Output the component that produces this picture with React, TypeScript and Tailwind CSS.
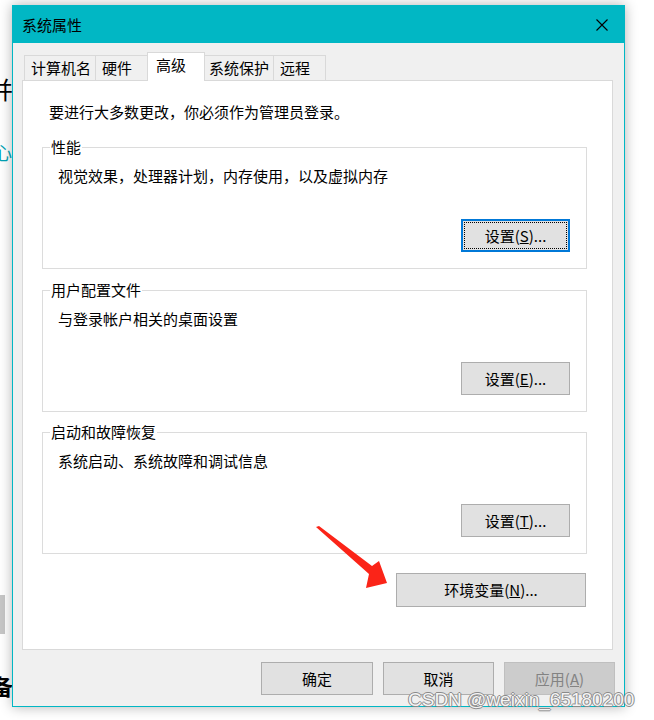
import React from "react";

const FONT = { fontFamily: '"Noto Sans CJK SC", "Microsoft YaHei", sans-serif' };

function Btn({
  children,
  w,
  focused,
  disabled,
  h = "h-[33px]",
}: {
  children: React.ReactNode;
  w: string;
  focused?: boolean;
  disabled?: boolean;
  h?: string;
}) {
  const base = `relative flex items-center justify-center ${w} ${h} text-[15px] leading-[20px]`;
  if (focused)
    return (
      <div className={`${base} bg-[#e1e1e1] border-2 border-[#0078d7] text-black`}>
        <span className="absolute inset-[1px] border border-dotted border-black" />
        <span className="relative">{children}</span>
      </div>
    );
  if (disabled)
    return (
      <div className={`${base} bg-[#cccccc] border border-[#bfbfbf] text-[#838383]`}>{children}</div>
    );
  return <div className={`${base} bg-[#e1e1e1] border border-[#adadad] text-black`}>{children}</div>;
}

function Group({
  title,
  desc,
  btn,
  focused,
  className = "",
}: {
  title: string;
  desc: string;
  btn: React.ReactNode;
  focused?: boolean;
  className?: string;
}) {
  return (
    <div
      className={`relative h-[122px] border border-[#dcdcdc] flex flex-col justify-between pt-[18px] pb-[16px] pl-[15px] pr-[16px] ${className}`}
    >
      <span className="absolute -top-[11px] left-[7px] bg-white px-[1px] text-[15px] leading-[20px] text-black">
        {title}
      </span>
      <div className="text-[15px] leading-[20px] text-black">{desc}</div>
      <div className="self-end">
        <Btn w="w-[109px]" focused={focused}>
          {btn}
        </Btn>
      </div>
    </div>
  );
}

export default function App() {
  const tabs = [
    { label: "计算机名", w: "w-[72px]", pl: "pl-[6px]" },
    { label: "硬件", w: "w-[53px]", pl: "pl-[6px]" },
    { label: "高级", w: "w-[58px]", pl: "pl-[8px]", active: true },
    { label: "系统保护", w: "w-[70px]", pl: "pl-[4px]" },
    { label: "远程", w: "w-[53px]", pl: "pl-[6px]" },
  ];
  return (
    <div className="relative w-[654px] h-[720px] bg-white overflow-hidden" style={FONT}>
      {/* background page fragments behind the window */}
      <span className="absolute left-[-11px] top-[74px] text-[24px] leading-[30px] text-black">并</span>
      <span className="absolute left-[-6px] top-[141px] text-[18px] leading-[22px] text-[#00a3b5]">心</span>
      <span className="absolute left-0 top-[595px] w-[5px] h-[39px] bg-[#c6c6c6]" />
      <span className="absolute left-[-9px] top-[672px] text-[22px] leading-[26px] font-bold text-black">备</span>

      {/* window */}
      <div className="relative ml-[12px] mt-[5px] w-[613px] h-[702px] border border-[#01b7c4] bg-[#f0f0f0] flex flex-col shadow-[0_0_12px_rgba(0,0,0,0.3)]">
        <div className="h-[37px] bg-[#01b7c4] flex items-center justify-between pl-[9px]">
          <span className="text-[15px] leading-[20px] text-black">系统属性</span>
          <div className="w-[46px] h-full flex items-center justify-center mr-[-1px]">
            <svg width="12" height="12" viewBox="0 0 12 12">
              <path d="M0.5 0.5L11.5 11.5M11.5 0.5L0.5 11.5" stroke="#000" strokeWidth="1.1" />
            </svg>
          </div>
        </div>

        <div className="flex-1 flex flex-col pl-[9px] pr-[11px]">
          {/* tabs */}
          <div className="mt-[10px] ml-[2px] h-[27px] flex items-end relative z-10">
            {tabs.map((t, i) =>
              t.active ? (
                <div
                  key={i}
                  className={`${t.w} ${t.pl} -ml-px h-[29px] mb-[-1px] bg-white border-l border-t border-r border-[#d9d9d9] text-[15px] leading-[20px] text-black pt-[2px]`}
                >
                  {t.label}
                </div>
              ) : (
                <div
                  key={i}
                  className={`${t.w} ${t.pl} ${i > 0 ? "-ml-px" : ""} h-[25px] bg-[#f0f0f0] border-l border-t border-r border-[#d9d9d9] text-[15px] leading-[20px] text-black pt-[2px]`}
                >
                  {t.label}
                </div>
              )
            )}
          </div>

          {/* panel */}
          <div className="h-[570px] bg-white border border-[#d9d9d9] flex flex-col pl-[19px] pr-[25px]">
            <div className="mt-[21px] pl-[7px] text-[15px] leading-[20px] text-black">
              要进行大多数更改，你必须作为管理员登录。
            </div>
            <Group
              className="mt-[25px]"
              title="性能"
              desc="视觉效果，处理器计划，内存使用，以及虚拟内存"
              focused
              btn={
                <>
                  设置(<u>S</u>)...
                </>
              }
            />
            <Group
              className="mt-[21px]"
              title="用户配置文件"
              desc="与登录帐户相关的桌面设置"
              btn={
                <>
                  设置(<u>E</u>)...
                </>
              }
            />
            <Group
              className="mt-[20px]"
              title="启动和故障恢复"
              desc="系统启动、系统故障和调试信息"
              btn={
                <>
                  设置(<u>T</u>)...
                </>
              }
            />
            <div className="mt-[19px] self-end mr-[1px]">
              <Btn w="w-[190px]" h="h-[34px]">
                环境变量(<u>N</u>)...
              </Btn>
            </div>
          </div>

          {/* bottom buttons */}
          <div className="mt-[12px] flex justify-end gap-[10px] -mr-[2px]">
            <Btn w="w-[112px]">确定</Btn>
            <Btn w="w-[111px]">取消</Btn>
            <Btn w="w-[111px]" disabled>
              应用(<u>A</u>)
            </Btn>
          </div>
        </div>
      </div>

      {/* red arrow annotation */}
      <svg className="absolute left-0 top-0 pointer-events-none" width="654" height="720">
        <polygon
          points="316,527 319,526 372,566 379,561 387,583 366,588 369,574"
          fill="#fb2418"
        />
      </svg>

      {/* watermark */}
      <span
        className="absolute left-[408px] top-[688px] text-[19px] leading-[24px] text-[#f4f4f4] [text-shadow:1px_0_#8a8a8a,-1px_0_#8a8a8a,0_1px_#8a8a8a,0_-1px_#8a8a8a]"
        style={{ fontFamily: '"Liberation Sans", Arial, sans-serif' }}
      >
        CSDN @weixin_65180200
      </span>
    </div>
  );
}
